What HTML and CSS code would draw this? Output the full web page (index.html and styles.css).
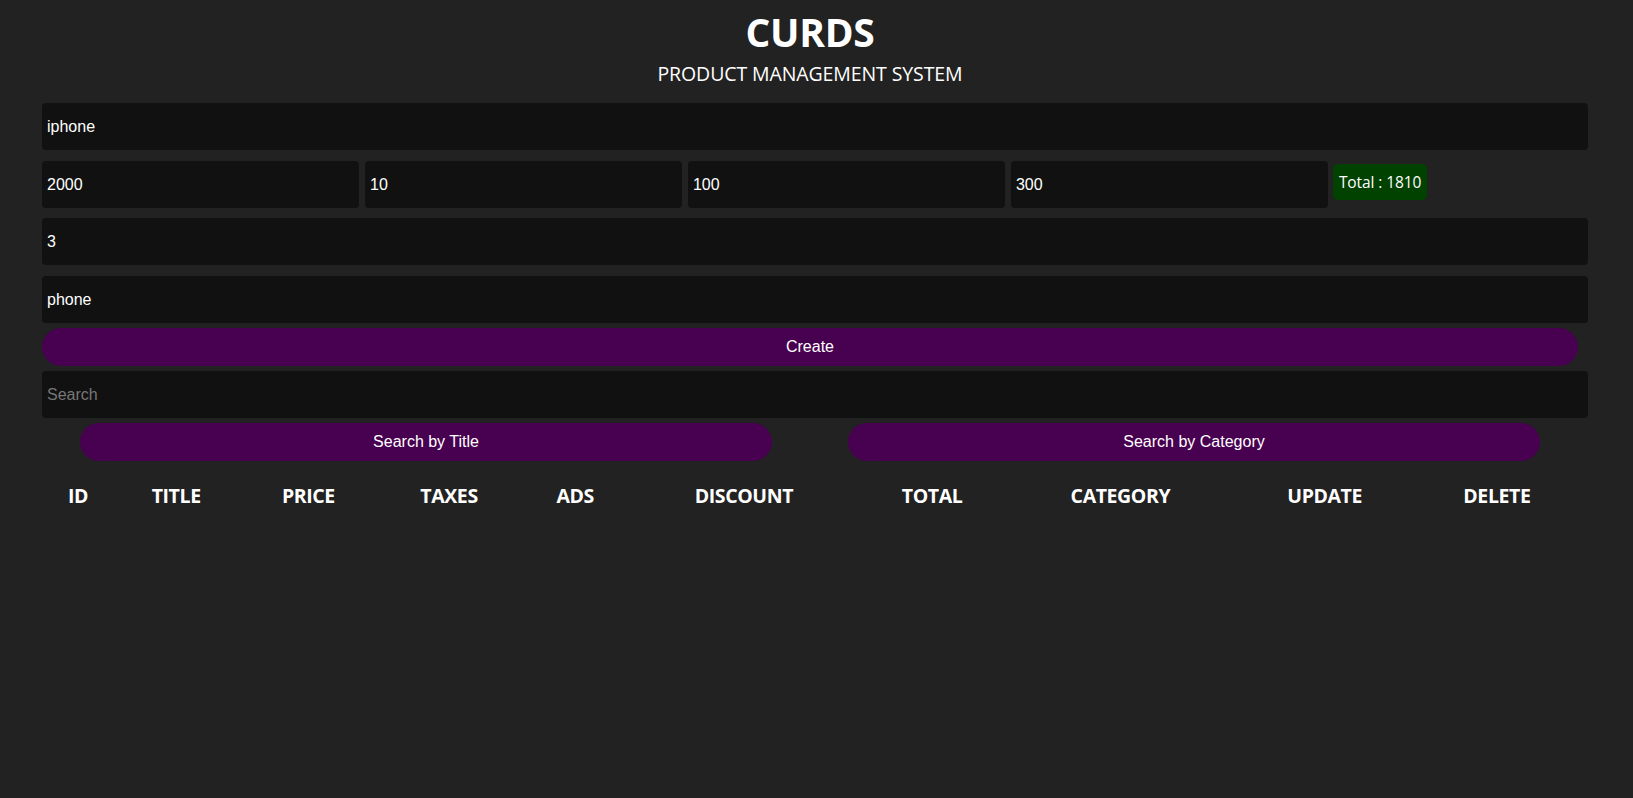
FILE: index.html
```html
<!DOCTYPE html>
<html lang="en">
<head>
<meta charset="utf-8">
<title>CRUDS</title>
<link rel="stylesheet" href="styles.css">
</head>
<body>
<div class="crud">
  <header class="head">
    <h1 class="title">CURDS</h1>
    <h2 class="subtitle">PRODUCT MANAGEMENT SYSTEM</h2>
  </header>
  <div class="inputs">
    <input class="field gap-l" type="text" value="iphone" placeholder="title">
    <div class="price gap-m">
      <input class="field small" type="number" value="2000" placeholder="price">
      <input class="field small" type="number" value="10" placeholder="taxes">
      <input class="field small" type="number" value="100" placeholder="ads">
      <input class="field small" type="number" value="300" placeholder="discount">
      <small class="total">Total : 1810</small>
    </div>
    <input class="field gap-l" type="number" value="3" placeholder="count">
    <input class="field gap-s" type="text" value="phone" placeholder="category">
    <button class="btn create gap-s">Create</button>
  </div>
  <div class="outputs">
    <input class="field gap-s" type="text" placeholder="Search">
    <div class="search-block">
      <button class="btn half">Search by Title</button>
      <button class="btn half">Search by Category</button>
    </div>
    <div class="table-head">
      <div class="th">ID</div>
      <div class="th">TITLE</div>
      <div class="th">PRICE</div>
      <div class="th">TAXES</div>
      <div class="th">ADS</div>
      <div class="th">DISCOUNT</div>
      <div class="th">TOTAL</div>
      <div class="th">CATEGORY</div>
      <div class="th">UPDATE</div>
      <div class="th">DELETE</div>
    </div>
  </div>
</div>
</body>
</html>
```

FILE: styles.css
```css
* {
  margin: 0;
  padding: 0;
}

html, body {
  background: #222222;
  color: #ffffff;
}

body {
  margin: 0;
  height: 798px;
  overflow: hidden;
  font-family: "Open Sans", "Noto Sans", sans-serif;
}

.crud {
  margin: 0 55px 0 42px;
}

.head {
  text-align: center;
  padding-top: 12px;
  padding-bottom: 19px;
}

.title {
  font-size: 39px;
  font-weight: 700;
  line-height: 40px;
  letter-spacing: -0.3px;
}

.subtitle {
  margin-top: 12px;
  font-size: 19.5px;
  font-weight: 400;
  line-height: 20px;
  letter-spacing: -0.1px;
}

.inputs,
.outputs {
  display: flex;
  flex-direction: column;
}

.field {
  display: block;
  box-sizing: content-box;
  width: 100%;
  height: 47px;
  padding: 0 5px;
  border: none;
  outline: none;
  border-radius: 4px;
  background: #111111;
  color: #ffffff;
  font-family: "Liberation Sans", Arial, sans-serif;
  font-size: 16px;
}

.field::placeholder {
  color: #777777;
}

.field::-webkit-outer-spin-button,
.field::-webkit-inner-spin-button {
  -webkit-appearance: none;
  margin: 0;
}

.gap-l { margin-bottom: 11px; }
.gap-m { margin-bottom: 10px; }
.gap-s { margin-bottom: 5px; }

.price {
  display: flex;
  align-items: center;
  gap: 5.8px;
}

.field.small {
  width: 307.2px;
  flex: none;
}

.total {
  flex: none;
  background: #014201;
  color: #ffffff;
  font-family: "Open Sans", "Noto Sans", sans-serif;
  font-size: 15.5px;
  line-height: 24px;
  padding: 6px 6px;
  border-radius: 5px;
  margin-left: -1px;
  margin-bottom: 5px;
  letter-spacing: -0.1px;
}

.btn {
  display: block;
  height: 38px;
  border: none;
  border-radius: 19px;
  background: #480050;
  color: #ffffff;
  font-family: "Liberation Sans", Arial, sans-serif;
  font-size: 16px;
  cursor: pointer;
}

.create {
  width: 100%;
}

.search-block {
  display: flex;
  justify-content: space-around;
}

.half {
  width: 45%;
}

.table-head {
  margin-top: 21px;
  display: grid;
  grid-template-columns: 72fr 124fr 140fr 141fr 111fr 226fr 150fr 226fr 182fr 162fr;
}

.th {
  text-align: center;
  font-size: 19.5px;
  font-weight: 700;
  line-height: 28px;
  letter-spacing: -0.4px;
}
```
